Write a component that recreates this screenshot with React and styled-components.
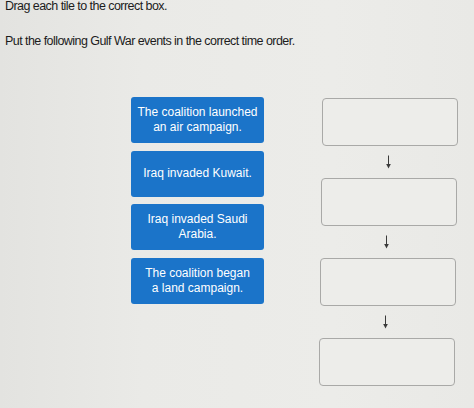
import React from "react";
import styled, { createGlobalStyle } from "styled-components";

const GlobalStyle = createGlobalStyle`
  html, body {
    margin: 0;
    padding: 0;
  }
  body {
    width: 474px;
    height: 408px;
    overflow: hidden;
    background: linear-gradient(90deg, #e3e3e0 0%, #eaeae7 30%, #ecece9 70%, #e9e9e6 100%);
    font-family: "Liberation Sans", Arial, sans-serif;
    color: #222;
  }
`;

const Page = styled.div`
  padding: 0 0 0 5px;
`;

const Instruction = styled.p`
  margin: ${(p) => p.$top}px 0 0 0;
  font-size: 12.5px;
  line-height: 14px;
  letter-spacing: -0.55px;
  color: #1c1c1c;
`;

const Board = styled.div`
  display: flex;
  align-items: flex-start;
  margin-top: 49px;
`;

const TileColumn = styled.div`
  display: flex;
  flex-direction: column;
  gap: 7.5px;
  margin-left: 126px;
`;

const Tile = styled.div`
  width: 133px;
  height: 46px;
  box-sizing: border-box;
  display: flex;
  flex-direction: column;
  align-items: center;
  justify-content: center;
  text-align: center;
  background: #1b74c9;
  border-radius: 3px;
  color: #fff;
  font-size: 12px;
  line-height: 15px;
`;

const DropColumn = styled.div`
  display: flex;
  flex-direction: column;
  align-items: center;
  margin-left: 54px;
  margin-top: 1px;
`;

const DropBox = styled.div`
  width: 136px;
  height: 48px;
  box-sizing: border-box;
  border: 1px solid #a9a9a7;
  border-radius: 4px;
  background: #ededea;
  margin-left: ${(p) => p.$shift}px;
`;

const ArrowSlot = styled.div`
  height: 32px;
  display: flex;
  align-items: center;
  justify-content: center;
  margin-left: ${(p) => p.$shift}px;
`;

const DownArrow = () => (
  <svg width="7" height="14" viewBox="0 0 7 14">
    <line x1="3.5" y1="0.5" x2="3.5" y2="10" stroke="#3a3a3a" strokeWidth="1" />
    <polygon points="1.2,9 5.8,9 3.5,13.5" fill="#3a3a3a" />
  </svg>
);

const tiles = [
  ["The coalition launched", "an air campaign."],
  ["Iraq invaded Kuwait."],
  ["Iraq invaded Saudi", "Arabia."],
  ["The coalition began", "a land campaign."],
];

const shifts = [4, 2, -1, -3];

export default function App() {
  return (
    <>
      <GlobalStyle />
      <Page>
        <Instruction $top={-1}>Drag each tile to the correct box.</Instruction>
        <Instruction $top={21}>Put the following Gulf War events in the correct time order.</Instruction>
        <Board>
          <TileColumn>
            {tiles.map((lines) => (
              <Tile key={lines[0]}>
                {lines.map((l) => (
                  <span key={l}>{l}</span>
                ))}
              </Tile>
            ))}
          </TileColumn>
          <DropColumn>
            {shifts.map((s, i) => (
              <React.Fragment key={i}>
                {i > 0 && (
                  <ArrowSlot $shift={s - 2}>
                    <DownArrow />
                  </ArrowSlot>
                )}
                <DropBox $shift={s} />
              </React.Fragment>
            ))}
          </DropColumn>
        </Board>
      </Page>
    </>
  );
}
